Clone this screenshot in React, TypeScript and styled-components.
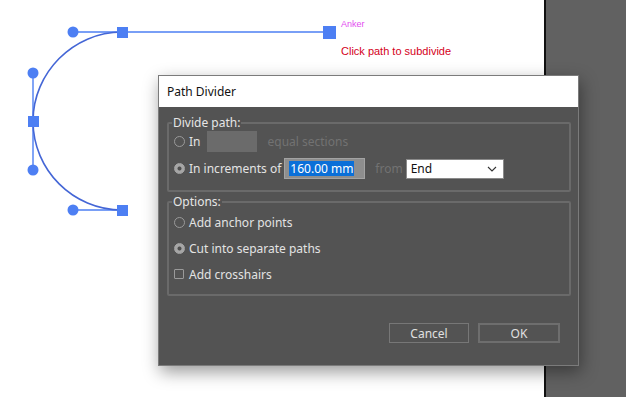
import React from 'react';
import styled, { createGlobalStyle } from 'styled-components';

const GlobalStyle = createGlobalStyle`
  html, body {
    margin: 0;
    padding: 0;
    background: #ffffff;
    overflow: hidden;
  }
`;

const Screen = styled.div`
  position: relative;
  display: flex;
  width: 626px;
  height: 397px;
  font-family: "Noto Sans", "Open Sans", sans-serif;
`;

const Canvas = styled.div`
  position: relative;
  flex: 1;
  background: #ffffff;
`;

const SidePanel = styled.div`
  width: 80px;
  background: #616161;
  border-left: 2px solid #111111;
`;

const Drawing = styled.svg`
  display: block;
`;

const Hint = styled.div`
  position: absolute;
  left: 341px;
  font-family: "Liberation Sans", Arial, sans-serif;
`;

const AnchorLabel = styled(Hint)`
  top: 19px;
  font-size: 9px;
  color: #e34cf0;
`;

const ClickLabel = styled(Hint)`
  top: 45px;
  font-size: 11px;
  color: #d4001a;
`;

const Dialog = styled.div`
  position: absolute;
  left: 158px;
  top: 75px;
  width: 419px;
  height: 289px;
  display: flex;
  flex-direction: column;
  background: #535353;
  border: 1px solid #7b7b7b;
  box-shadow: 2px 6px 16px rgba(0, 0, 0, 0.4);
`;

const TitleBar = styled.div`
  height: 31px;
  display: flex;
  align-items: center;
  padding-left: 8px;
  background: #ffffff;
  color: #111111;
  font-size: 12px;
`;

const Body = styled.div`
  flex: 1;
  display: flex;
  flex-direction: column;
  padding: 9px 7px 0 8px;
  color: #e3e3e3;
  font-size: 12px;
`;

const Group = styled.fieldset<{ $height: number }>`
  margin: 0 0 3px 0;
  padding: 0 0 0 5px;
  height: ${(p) => p.$height}px;
  box-sizing: border-box;
  border: 2px solid #6a6a6a;
  border-radius: 2px;
  display: flex;
  flex-direction: column;
`;

const Legend = styled.legend`
  padding: 0 1px;
  margin-left: -2px;
  color: #e6e6e6;
  font-size: 12px;
  line-height: 14px;
`;

const Row = styled.div<{ $height: number }>`
  display: flex;
  align-items: center;
  height: ${(p) => p.$height}px;
  flex-shrink: 0;
`;

const Radio = styled.span<{ $checked?: boolean }>`
  width: 11px;
  height: 11px;
  border-radius: 50%;
  box-sizing: border-box;
  margin-right: 4px;
  border: 1px solid ${(p) => (p.$checked ? '#a6a6a6' : '#9a9a9a')};
  background: ${(p) =>
    p.$checked
      ? 'radial-gradient(circle, #4e4e4e 0 1.6px, #a6a6a6 2.4px)'
      : 'transparent'};
`;

const Check = styled.span`
  width: 10px;
  height: 10px;
  box-sizing: border-box;
  margin-right: 5px;
  border: 1px solid #9a9a9a;
  border-radius: 1px;
`;

const Label = styled.span<{ $disabled?: boolean }>`
  color: ${(p) => (p.$disabled ? '#727272' : '#e3e3e3')};
  white-space: nowrap;
`;

const DisabledField = styled.span`
  width: 50px;
  height: 21px;
  margin: 0 10px 0 7px;
  background: #6b6b6b;
`;

const NumberField = styled.span`
  width: 75px;
  height: 19px;
  margin: 0 10px 0 3px;
  display: flex;
  align-items: center;
  padding-left: 4px;
  background: #8e8e8e;
  border: 1px solid #a3a3a3;
`;

const Selected = styled.span`
  background: #0a6fd8;
  color: #ffffff;
  line-height: 15px;
  padding: 0 1px;
`;

const Select = styled.span`
  width: 98px;
  height: 20px;
  margin-left: 3px;
  box-sizing: border-box;
  display: flex;
  align-items: center;
  justify-content: space-between;
  padding: 0 6px 0 4px;
  background: #ffffff;
  border: 1px solid #8a8a8a;
  color: #111111;
`;

const Footer = styled.div`
  display: flex;
  justify-content: flex-end;
  gap: 9px;
  padding: 24px 11px 0 0;
`;

const Button = styled.button<{ $primary?: boolean }>`
  width: ${(p) => (p.$primary ? 82 : 80)}px;
  height: 20px;
  padding: 0;
  background: #535353;
  color: #e0e0e0;
  font-family: inherit;
  font-size: 12px;
  border: ${(p) => (p.$primary ? '2px solid #6e6e6e' : '1px solid #777777')};
  border-radius: 0;
`;

const blue = '#4d7ff3';

const PathDrawing: React.FC = () => (
  <Drawing width="544" height="397">
    <g stroke={blue} strokeWidth="1.4" fill="none">
      <line x1="122" y1="32" x2="330" y2="32" />
      <line x1="73" y1="32" x2="122" y2="32" />
      <line x1="33" y1="73" x2="33" y2="170" />
      <line x1="73" y1="210" x2="122" y2="210" />
      <path
        d="M122 32 C73 32 33 73 33 121 C33 170 73 210 122 210"
        stroke="#4466d6"
        strokeWidth="1.6"
      />
    </g>
    <g fill={blue}>
      <circle cx="73" cy="32" r="5.5" />
      <circle cx="33" cy="73" r="5.5" />
      <circle cx="33" cy="170" r="5.5" />
      <circle cx="73" cy="210" r="5.5" />
      <rect x="117" y="27" width="11" height="11" />
      <rect x="28" y="116" width="11" height="11" />
      <rect x="117" y="205" width="11" height="11" />
      <rect x="323" y="26" width="13" height="13" />
    </g>
  </Drawing>
);

const Chevron: React.FC = () => (
  <svg width="10" height="6" viewBox="0 0 10 6">
    <path d="M1 1 L5 5 L9 1" stroke="#333" strokeWidth="1.1" fill="none" />
  </svg>
);

const App: React.FC = () => {
  return (
    <>
      <GlobalStyle />
      <Screen>
        <Canvas>
          <PathDrawing />
          <AnchorLabel>Anker</AnchorLabel>
          <ClickLabel>Click path to subdivide</ClickLabel>
        </Canvas>
        <SidePanel />
        <Dialog>
          <TitleBar>Path Divider</TitleBar>
          <Body>
            <Group $height={76}>
              <Legend>Divide path:</Legend>
              <Row $height={23}>
                <Radio />
                <Label>In</Label>
                <DisabledField />
                <Label $disabled>equal sections</Label>
              </Row>
              <Row $height={31}>
                <Radio $checked />
                <Label>In increments of</Label>
                <NumberField>
                  <Selected>160.00 mm</Selected>
                </NumberField>
                <Label $disabled>from</Label>
                <Select>
                  End
                  <Chevron />
                </Select>
              </Row>
            </Group>
            <Group $height={101}>
              <Legend>Options:</Legend>
              <Row $height={26}>
                <Radio />
                <Label>Add anchor points</Label>
              </Row>
              <Row $height={26}>
                <Radio $checked />
                <Label>Cut into separate paths</Label>
              </Row>
              <Row $height={26}>
                <Check />
                <Label>Add crosshairs</Label>
              </Row>
            </Group>
            <Footer>
              <Button>Cancel</Button>
              <Button $primary>OK</Button>
            </Footer>
          </Body>
        </Dialog>
      </Screen>
    </>
  );
};

export default App;
